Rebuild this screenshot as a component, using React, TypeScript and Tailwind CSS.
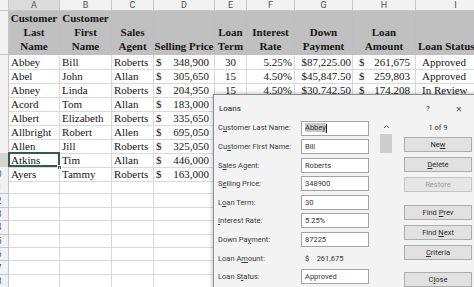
import React from "react";

const cols = "grid grid-cols-[9px_51px_52px_42px_61px_32px_48px_58px_63px_80px]";
const line = "border-r border-b border-[#d9d9d9]";

type Row = {
  last: string;
  first: string;
  agent: string;
  price: string;
  term?: string;
  rate?: string;
  down?: string;
  amount?: string;
  status?: string;
};

const rows: Row[] = [
  { last: "Abbey", first: "Bill", agent: "Roberts", price: "348,900", term: "30", rate: "5.25%", down: "$87,225.00", amount: "261,675", status: "Approved" },
  { last: "Abel", first: "John", agent: "Allan", price: "305,650", term: "15", rate: "4.50%", down: "$45,847.50", amount: "259,803", status: "Approved" },
  { last: "Abney", first: "Linda", agent: "Roberts", price: "204,950", term: "15", rate: "4.50%", down: "$30,742.50", amount: "174,208", status: "In Review" },
  { last: "Acord", first: "Tom", agent: "Allan", price: "183,000" },
  { last: "Albert", first: "Elizabeth", agent: "Roberts", price: "335,650" },
  { last: "Allbright", first: "Robert", agent: "Allen", price: "695,050" },
  { last: "Allen", first: "Jill", agent: "Roberts", price: "325,050" },
  { last: "Atkins", first: "Tim", agent: "Allan", price: "446,000" },
  { last: "Ayers", first: "Tammy", agent: "Roberts", price: "163,000" },
];

function RowNum({ n, active }: { n: number; active?: boolean }) {
  return (
    <div
      className={`overflow-hidden border-r border-b border-[#c4c4c4] ${active ? "bg-[#d4d4d4]" : "bg-[#f2f2f2]"}`}
    >
      <div className="-ml-[16px] w-[25px] h-full flex items-center justify-center font-['Roboto'] text-[9px] text-[#555]">
        {n}
      </div>
    </div>
  );
}

function Sheet() {
  const letters = ["A", "B", "C", "D", "E", "F", "G", "H", "I"];
  return (
    <div className="font-['Liberation_Serif',serif] text-[11px] leading-[14px] text-[#151515]">
      {/* column letters */}
      <div className={`${cols} h-[11px]`}>
        <div className="bg-[#f2f2f2] border-r border-b border-[#c4c4c4]" />
        {letters.map((l, i) => (
          <div
            key={l}
            className={`flex items-center justify-center border-r border-b border-[#c8c8c8] font-['Roboto'] text-[9px] leading-none text-[#505050] ${i === 0 ? "bg-[#dcdcdc]" : "bg-[#f2f2f2]"}`}
          >
            {l}
          </div>
        ))}
      </div>

      {/* header row */}
      <div className={`${cols} h-[44px] font-bold`}>
        <RowNum n={1} />
        {[
          ["Customer", "Last", "Name"],
          ["Customer", "First", "Name"],
          ["Sales", "Agent"],
          ["Selling Price"],
          ["Loan", "Term"],
          ["Interest", "Rate"],
          ["Down", "Payment"],
          ["Loan", "Amount"],
        ].map((lines, i) => (
          <div
            key={i}
            className="bg-[#c0c0c0] border-r border-b border-[#bebebe] flex flex-col justify-end items-center pb-[1px] whitespace-nowrap"
          >
            {lines.map((t) => (
              <span key={t}>{t}</span>
            ))}
          </div>
        ))}
        <div className="bg-[#c0c0c0] border-b border-[#bebebe] flex items-end pl-[2px] pb-[1px] whitespace-nowrap">
          Loan Status
        </div>
      </div>

      {/* data rows */}
      {rows.map((r, i) => {
        const active = r.last === "Atkins";
        return (
          <div key={r.last} className={`${cols} h-[14px]`}>
            <RowNum n={i + 2} active={active} />
            <div className={`${line} relative pl-[2px] whitespace-nowrap`}>
              {r.last}
              {active && (
                <>
                  <div className="absolute -left-[1px] -top-[1px] w-[52px] h-[15px] border-2 border-[#2f5f42]" />
                  <div className="absolute -right-[3px] -bottom-[3px] w-[5px] h-[5px] bg-[#2f5f42] border border-white" />
                </>
              )}
            </div>
            <div className={`${line} pl-[2px] whitespace-nowrap`}>{r.first}</div>
            <div className={`${line} pl-[2px] whitespace-nowrap`}>{r.agent}</div>
            <div className={`${line} flex justify-between pl-[2px] pr-[5px]`}>
              <span>$</span>
              <span>{r.price}</span>
            </div>
            <div className={`${line} text-center`}>{r.term}</div>
            <div className={`${line} text-right pr-[2px]`}>{r.rate}</div>
            <div className={`${line} text-right pr-[1px] whitespace-nowrap`}>{r.down}</div>
            <div className={`${line} flex justify-between pl-[6px] pr-[5px]`}>
              {r.amount && (
                <>
                  <span>$</span>
                  <span>{r.amount}</span>
                </>
              )}
            </div>
            <div className="border-b border-[#d9d9d9] pl-[6px] whitespace-nowrap">{r.status}</div>
          </div>
        );
      })}

      {/* empty rows */}
      {[11, 12, 13, 14, 15, 16, 17, 18].map((n) => (
        <div key={n} className={`${cols} h-[13.4px]`}>
          <RowNum n={n} />
          {letters.map((l) => (
            <div key={l} className={line} />
          ))}
        </div>
      ))}
    </div>
  );
}

const fields: { label: React.ReactNode; value?: React.ReactNode; plain?: boolean }[] = [
  { label: <>C<u>u</u>stomer Last Name:</>, value: <span><span className="bg-[#c9c9c9]">Abbey</span><span className="inline-block w-px h-[9px] bg-[#222] align-middle" /></span> },
  { label: <>Cu<u>s</u>tomer First Name:</>, value: "Bill" },
  { label: <>S<u>a</u>les Agent:</>, value: "Roberts" },
  { label: <>S<u>e</u>lling Price:</>, value: "348900" },
  { label: <>L<u>o</u>an Term:</>, value: "30" },
  { label: <><u>I</u>nterest Rate:</>, value: "5.25%" },
  { label: <>Down Pa<u>y</u>ment:</>, value: "87225" },
  { label: <>Loan A<u>m</u>ount:</>, value: <span className="pl-[1px] whitespace-pre">$    261,675</span>, plain: true },
  { label: <>Loan S<u>t</u>atus:</>, value: "Approved" },
];

function Btn({ children, disabled, className = "" }: { children: React.ReactNode; disabled?: boolean; className?: string }) {
  return (
    <div
      className={`h-[15px] flex items-center justify-center border ${disabled ? "border-[#c6c6c6] bg-[#e6e6e6] text-[#9a9a9a]" : "border-[#adadad] bg-[#e1e1e1] text-[#2a2a2a]"} ${className}`}
    >
      <span className="whitespace-pre">{children}</span>
    </div>
  );
}

function LoansDialog() {
  return (
    <div className="absolute left-[213px] top-[94px] w-[280px] h-[210px] bg-[#f3f3f3] border border-[#8e8e8e] shadow-[0_0_5px_rgba(0,0,0,0.3)] font-['Roboto',sans-serif] text-[7.5px] text-[#333]">
      {/* title bar */}
      <div className="h-[25.5px] flex items-center pl-[5px] pr-[28px] pt-[2px] text-[8px]">
        <span className="flex-1 text-[#222]">Loans</span>
        <span className="w-[10px] text-center text-[#333]">?</span>
        <span className="w-[21px]" />
        <span className="w-[10px] text-center text-[11px] font-light text-[#333]">×</span>
      </div>

      <div className="flex">
        {/* form */}
        <div className="flex flex-col gap-[3.6px] pl-[4px]">
          {fields.map((f, i) => (
            <div key={i} className="flex h-[15px] items-center">
              <div className="w-[83px] whitespace-nowrap text-[#3a3a3a]">{f.label}</div>
              <div
                className={`w-[68px] h-[15px] flex items-center pl-[3px] whitespace-nowrap ${f.plain ? "" : "bg-white border border-[#a3a3a3]"}`}
              >
                {f.value}
              </div>
            </div>
          ))}
        </div>

        {/* scrollbar */}
        <div className="ml-[11px] w-[12px] flex flex-col">
          <div className="h-[11px] flex items-center justify-center">
            <svg width="7" height="5" viewBox="0 0 7 5">
              <path d="M1 4 L3.5 1.5 L6 4" fill="none" stroke="#555" strokeWidth="1" />
            </svg>
          </div>
          <div className="mt-[2px] h-[19px] bg-[#cdcdcd]" />
        </div>

        {/* buttons */}
        <div className="ml-[12px] w-[68px] flex flex-col">
          <div className="h-[15px] flex items-center justify-center text-[#333]">1 of 9</div>
          <Btn className="mt-[1.5px]">Ne<u>w</u></Btn>
          <Btn className="mt-[5px]"><u>D</u>elete</Btn>
          <Btn className="mt-[5px]" disabled>Restore</Btn>
          <Btn className="mt-[13px]">Find <u>P</u>rev</Btn>
          <Btn className="mt-[5px]">Find <u>N</u>ext</Btn>
          <Btn className="mt-[5px]"><u>C</u>riteria</Btn>
          <Btn className="mt-[12px]">C<u>l</u>ose</Btn>
        </div>
      </div>
    </div>
  );
}

export default function App() {
  return (
    <div className="relative w-[474px] h-[287px] overflow-hidden bg-white">
      <Sheet />
      <LoansDialog />
    </div>
  );
}
